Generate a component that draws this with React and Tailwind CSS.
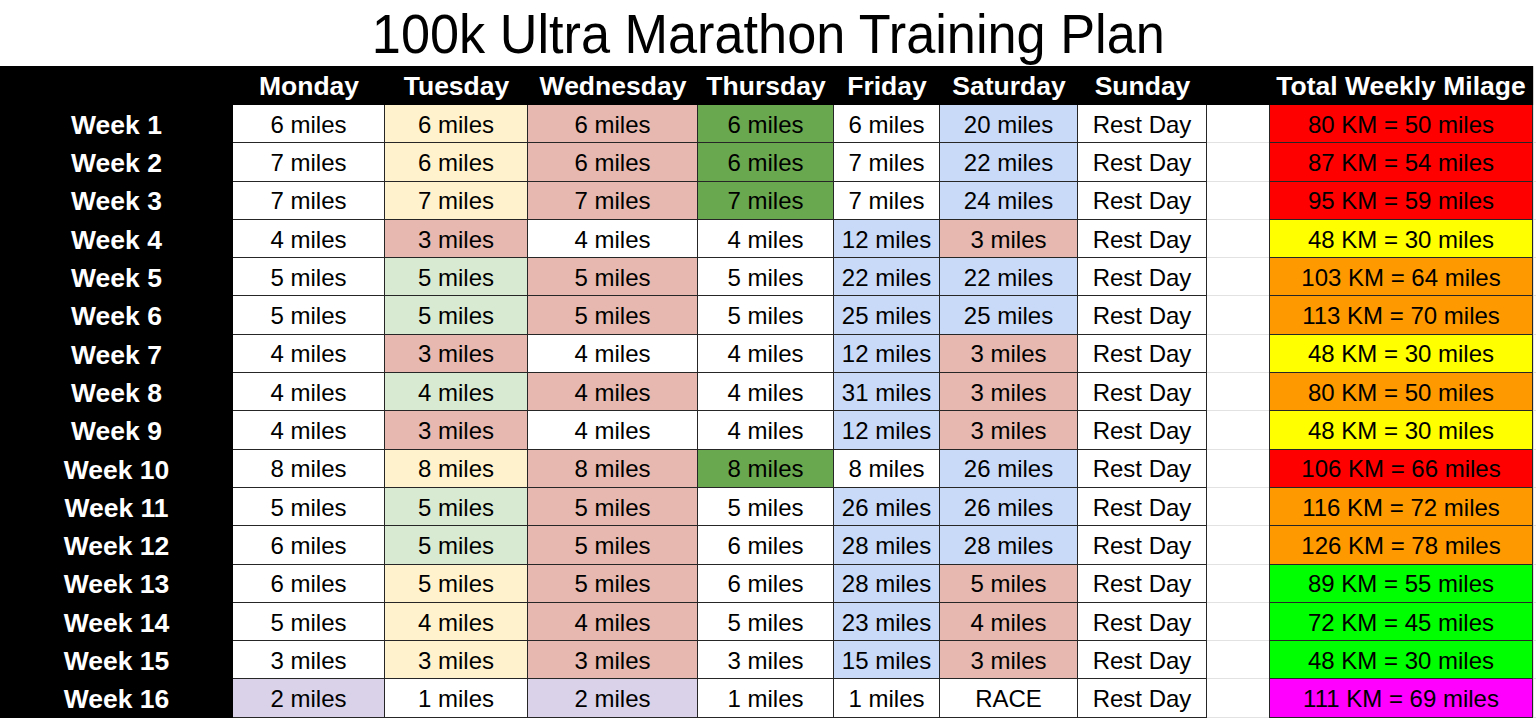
import React from "react";

const C = {
  w: "bg-white",
  y: "bg-[#fff2cc]",
  p: "bg-[#e6b8af]",
  g: "bg-[#6aa84f]",
  b: "bg-[#c9daf8]",
  lg: "bg-[#d9ead3]",
  lav: "bg-[#d9d2e9]",
};

const T = {
  red: "bg-[#ff0000]",
  yel: "bg-[#ffff00]",
  org: "bg-[#ff9900]",
  grn: "bg-[#00ff00]",
  mag: "bg-[#ff00ff]",
};

const days = ["Monday", "Tuesday", "Wednesday", "Thursday", "Friday", "Saturday", "Sunday"];

// [mon, tue, wed, thu, fri, sat] as [miles, colour], then total
const weeks = [
  [[6, "w"], [6, "y"], [6, "p"], [6, "g"], [6, "w"], [20, "b"], "80 KM = 50 miles", "red"],
  [[7, "w"], [6, "y"], [6, "p"], [6, "g"], [7, "w"], [22, "b"], "87 KM = 54 miles", "red"],
  [[7, "w"], [7, "y"], [7, "p"], [7, "g"], [7, "w"], [24, "b"], "95 KM = 59 miles", "red"],
  [[4, "w"], [3, "p"], [4, "w"], [4, "w"], [12, "b"], [3, "p"], "48 KM = 30 miles", "yel"],
  [[5, "w"], [5, "lg"], [5, "p"], [5, "w"], [22, "b"], [22, "b"], "103 KM = 64 miles", "org"],
  [[5, "w"], [5, "lg"], [5, "p"], [5, "w"], [25, "b"], [25, "b"], "113 KM = 70 miles", "org"],
  [[4, "w"], [3, "p"], [4, "w"], [4, "w"], [12, "b"], [3, "p"], "48 KM = 30 miles", "yel"],
  [[4, "w"], [4, "lg"], [4, "p"], [4, "w"], [31, "b"], [3, "p"], "80 KM = 50 miles", "org"],
  [[4, "w"], [3, "p"], [4, "w"], [4, "w"], [12, "b"], [3, "p"], "48 KM = 30 miles", "yel"],
  [[8, "w"], [8, "y"], [8, "p"], [8, "g"], [8, "w"], [26, "b"], "106 KM = 66 miles", "red"],
  [[5, "w"], [5, "lg"], [5, "p"], [5, "w"], [26, "b"], [26, "b"], "116 KM = 72 miles", "org"],
  [[6, "w"], [5, "lg"], [5, "p"], [6, "w"], [28, "b"], [28, "b"], "126 KM = 78 miles", "org"],
  [[6, "w"], [5, "y"], [5, "p"], [6, "w"], [28, "b"], [5, "p"], "89 KM = 55 miles", "grn"],
  [[5, "w"], [4, "y"], [4, "p"], [5, "w"], [23, "b"], [4, "p"], "72 KM = 45 miles", "grn"],
  [[3, "w"], [3, "y"], [3, "p"], [3, "w"], [15, "b"], [3, "p"], "48 KM = 30 miles", "grn"],
  [[2, "lav"], [1, "w"], [2, "lav"], [1, "w"], [1, "w"], ["RACE", "w"], "111 KM = 69 miles", "mag"],
];

const cell = "flex items-center justify-center pt-[2px] border-r border-b border-[#262626] text-[24px] text-black leading-none";
const label = "bg-black flex items-center justify-center pt-[2px] text-white font-bold text-[26.5px] leading-none whitespace-nowrap";

export default function App() {
  return (
    <div className="w-[1536px] h-[721px] bg-white overflow-hidden font-['Liberation_Sans',Arial,sans-serif]">
      <div className="h-[66px] flex items-center justify-center">
        <h1 className="text-[55px] leading-none text-black pt-[2px] scale-x-[0.95] whitespace-nowrap">
          100k Ultra Marathon Training Plan
        </h1>
      </div>

      <div className="grid grid-cols-[233px_152px_143px_170px_136px_106px_138px_129px_62px_264px_3px] grid-rows-[39px_repeat(16,38.3px)]">
        {/* header */}
        <div className="bg-black" />
        {days.map((d) => (
          <div key={d} className={label}>
            {d}
          </div>
        ))}
        <div className="bg-black" />
        <div className={label}>Total Weekly Milage</div>
        <div className="bg-white border-l border-[#d0d0d0]" />

        {weeks.map((row, i) => {
          const runs = row.slice(0, 6);
          const total = row[6];
          const tc = row[7];
          return (
            <React.Fragment key={i}>
              <div className={label}>Week {i + 1}</div>
              {runs.map(([m, c], j) => (
                <div key={j} className={`${cell} ${C[c]}`}>
                  {m === "RACE" ? "RACE" : `${m} miles`}
                </div>
              ))}
              <div className={`${cell} bg-white`}>Rest Day</div>
              <div className="bg-white border-b border-[#e2e2e2]" />
              <div className={`${cell} border-l ${T[tc]}`}>{total}</div>
              <div className="bg-white border-b border-l border-[#e2e2e2]" />
            </React.Fragment>
          );
        })}
      </div>
    </div>
  );
}
